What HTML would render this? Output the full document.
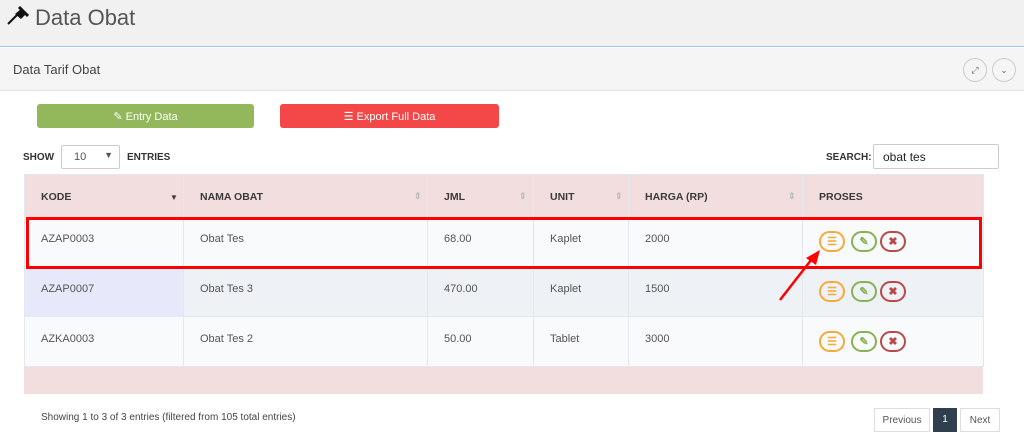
<!DOCTYPE html><html><head><style>
*{margin:0;padding:0;box-sizing:border-box}
body{width:1024px;height:446px;overflow:hidden;background:#fff;font-family:"Liberation Sans",sans-serif;color:#555;position:relative}
.a{position:absolute}
.hdr{left:0;top:0;width:1024px;height:47px;background:#f1f1f1;border-bottom:1px solid #9cc7e0}
.ph{left:0;top:48px;width:1024px;height:43px;background:#f5f5f5;border-bottom:1px solid #e2e2e2}
.btn{height:24px;border-radius:3px;color:#fff;font-size:11px;display:flex;align-items:center;justify-content:center;gap:6px}
.th,.td{position:absolute;font-size:11px}
.th{font-weight:bold;color:#3a3a3a;top:191px;font-size:10.5px}
.cell{position:absolute;border-right:1px solid #e3e8ef}
.ab{position:absolute;width:26px;height:21px;border:2px solid;border-radius:11px;display:flex;align-items:center;justify-content:center;font-size:11px;font-weight:bold}
.circ{width:24px;height:24px;border:1px solid #ccc;border-radius:50%;display:flex;align-items:center;justify-content:center;font-size:9px;color:#666}
</style></head><body>
<div class="a hdr"></div>
<svg class="a" style="left:6px;top:5px" width="24" height="22"><path d="M2 19 L11 10" stroke="#111" stroke-width="2"/><path d="M9 9 L15 4 L20 9 L15 14 Z" fill="#111"/><path d="M13 2 L22 11" stroke="#111" stroke-width="3"/></svg>
<div class="a" style="left:35px;top:5px;font-size:22px;color:#555">Data Obat</div>
<div class="a ph"></div>
<div class="a" style="left:13px;top:62px;font-size:13px;color:#444">Data Tarif Obat</div>
<div class="a circ" style="left:963px;top:58px">⤢</div>
<div class="a circ" style="left:992px;top:58px">⌄</div>
<div class="a btn" style="left:37px;top:104px;width:217px;background:#93b75b">✎ Entry Data</div>
<div class="a btn" style="left:280px;top:104px;width:219px;background:#f44848">☰ Export Full Data</div>
<div class="a" style="left:23px;top:152px;font-size:10px;font-weight:bold;color:#333">SHOW</div>
<div class="a" style="left:61px;top:145px;width:59px;height:24px;border:1px solid #ccc;border-radius:2px;font-size:11px;padding:5px 12px">10<span style="position:absolute;right:6px;top:4px;font-size:9px">▼</span></div>
<div class="a" style="left:127px;top:152px;font-size:10px;font-weight:bold;color:#333">ENTRIES</div>
<div class="a" style="left:826px;top:152px;font-size:10px;font-weight:bold;color:#333">SEARCH:</div>
<div class="a" style="left:873px;top:144px;width:126px;height:25px;border:1px solid #ccc;border-radius:2px;font-size:12px;padding:5px 9px;color:#222">obat tes</div>
<div class="a" style="left:24px;top:174px;width:959px;height:44px;background:#f2dede"></div>
<div class="a" style="left:24px;top:218px;width:959px;height:50px;background:#f9fafc;border-bottom:1px solid #e3e8ef"></div>
<div class="a" style="left:24px;top:268px;width:959px;height:49px;background:#eef1f6;border-bottom:1px solid #e3e8ef"></div>
<div class="a" style="left:24px;top:268px;width:160px;height:49px;background:#e8e8fb"></div>
<div class="a" style="left:24px;top:317px;width:959px;height:50px;background:#f9fafc"></div>
<div class="a" style="left:24px;top:367px;width:959px;height:27px;background:#f2dede"></div>
<div class="a" style="left:24px;top:174px;width:960px;height:193px;border:1px solid #e3e8ef"></div>
<div class="cell" style="left:183px;top:174px;height:193px"></div>
<div class="cell" style="left:427px;top:174px;height:193px"></div>
<div class="cell" style="left:533px;top:174px;height:193px"></div>
<div class="cell" style="left:628px;top:174px;height:193px"></div>
<div class="cell" style="left:802px;top:174px;height:193px"></div>
<div class="th" style="left:41px">KODE</div><div class="th" style="left:170px;font-size:8px;top:193px">▼</div>
<div class="th" style="left:200px">NAMA OBAT</div>
<div class="th" style="left:444px">JML</div>
<div class="th" style="left:550px">UNIT</div>
<div class="th" style="left:645px">HARGA (RP)</div>
<div class="th" style="left:819px">PROSES</div>
<div class="th" style="left:414px;color:#bbb;font-size:9px">⇕</div><div class="th" style="left:519px;color:#bbb;font-size:9px">⇕</div><div class="th" style="left:615px;color:#bbb;font-size:9px">⇕</div><div class="th" style="left:788px;color:#bbb;font-size:9px">⇕</div>
<div class="td" style="left:41px;top:233px">AZAP0003</div><div class="td" style="left:200px;top:233px">Obat Tes</div><div class="td" style="left:444px;top:233px">68.00</div><div class="td" style="left:550px;top:233px">Kaplet</div><div class="td" style="left:645px;top:233px">2000</div>
<div class="td" style="left:41px;top:283px">AZAP0007</div><div class="td" style="left:200px;top:283px">Obat Tes 3</div><div class="td" style="left:444px;top:283px">470.00</div><div class="td" style="left:550px;top:283px">Kaplet</div><div class="td" style="left:645px;top:283px">1500</div>
<div class="td" style="left:41px;top:333px">AZKA0003</div><div class="td" style="left:200px;top:333px">Obat Tes 2</div><div class="td" style="left:444px;top:333px">50.00</div><div class="td" style="left:550px;top:333px">Tablet</div><div class="td" style="left:645px;top:333px">3000</div>
<div class="ab" style="left:819px;top:231px;border-color:#f7a93a;color:#f7a93a">☰</div><div class="ab" style="left:851px;top:231px;border-color:#86b352;color:#86b352">✎</div><div class="ab" style="left:880px;top:231px;border-color:#b94a48;color:#b94a48">✖</div>
<div class="ab" style="left:819px;top:281px;border-color:#f7a93a;color:#f7a93a">☰</div><div class="ab" style="left:851px;top:281px;border-color:#86b352;color:#86b352">✎</div><div class="ab" style="left:880px;top:281px;border-color:#b94a48;color:#b94a48">✖</div>
<div class="ab" style="left:819px;top:331px;border-color:#f7a93a;color:#f7a93a">☰</div><div class="ab" style="left:851px;top:331px;border-color:#86b352;color:#86b352">✎</div><div class="ab" style="left:880px;top:331px;border-color:#b94a48;color:#b94a48">✖</div>
<div class="a" style="left:26px;top:217px;width:956px;height:52px;border:3px solid #f00"></div>
<svg class="a" style="left:770px;top:245px" width="60" height="60"><path d="M10 55 L45 10" stroke="#f00" stroke-width="2.5"/><path d="M50 5 L36 13 L46 20 Z" fill="#f00"/></svg>
<div class="a" style="left:41px;top:412px;font-size:10px;color:#444">Showing 1 to 3 of 3 entries (filtered from 105 total entries)</div>
<div class="a" style="left:874px;top:408px;width:56px;height:24px;border:1px solid #ddd;font-size:10px;text-align:center;line-height:24px">Previous</div>
<div class="a" style="left:933px;top:408px;width:24px;height:24px;background:#2f3f4e;color:#fff;font-size:10px;text-align:center;line-height:24px">1</div>
<div class="a" style="left:960px;top:408px;width:40px;height:24px;border:1px solid #ddd;font-size:10px;text-align:center;line-height:24px">Next</div>
</body></html>
